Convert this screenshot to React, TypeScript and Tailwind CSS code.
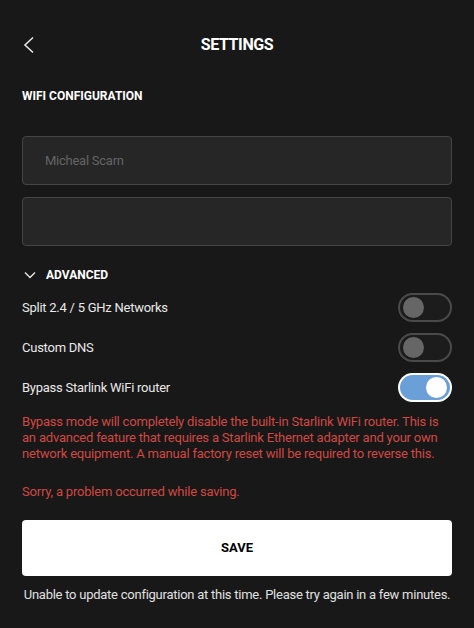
import { useState } from 'react';

function Toggle({ on, onChange }: { on: boolean; onChange: () => void }) {
  return (
    <button
      onClick={onChange}
      className={
        on
          ? 'flex h-[29px] w-[54px] items-center justify-end rounded-full border-2 border-white bg-[#6b9fd8] px-[3px]'
          : 'flex h-[29px] w-[54px] items-center justify-start rounded-full border-2 border-[#4a4a4a] bg-[#1c1c1c] px-[3px]'
      }
    >
      <span
        className={
          on
            ? 'h-[21px] w-[21px] rounded-full bg-white'
            : 'h-[21px] w-[21px] rounded-full bg-[#666666]'
        }
      />
    </button>
  );
}

function Row({ label, on, onChange }: { label: string; on: boolean; onChange: () => void }) {
  return (
    <div className="flex items-center justify-between">
      <span className="text-[13px] tracking-[-0.25px] text-[#e8e8e8]">{label}</span>
      <Toggle on={on} onChange={onChange} />
    </div>
  );
}

export default function App() {
  const [split, setSplit] = useState(false);
  const [dns, setDns] = useState(false);
  const [bypass, setBypass] = useState(true);

  return (
    <div className="min-h-[628px] w-full bg-[#181818] px-[22px] font-['Roboto','Liberation_Sans',sans-serif] text-white">
      {/* header */}
      <div className="relative flex h-[89px] items-center justify-center pt-[1px]">
        <button className="absolute left-[1px] top-[36px] text-[#e5e5e5]">
          <svg width="12" height="18" viewBox="0 0 12 18" fill="none">
            <path d="M10 1.5L2 9l8 7.5" stroke="currentColor" strokeWidth="1.6" />
          </svg>
        </button>
        <h1 className="text-[16px] font-bold tracking-[-0.4px]">SETTINGS</h1>
      </div>

      <div className="h-[14px] text-[12px] font-bold leading-[14px]">WIFI CONFIGURATION</div>

      <div className="mt-[33px] flex flex-col gap-[12px]">
        <input
          placeholder="Micheal Scarn"
          className="h-[49px] w-full rounded-[4px] border border-[#454545] bg-[#262626] px-[22px] text-[13px] tracking-[-0.25px] text-white outline-none placeholder:text-[#646464]"
        />
        <input className="h-[49px] w-full rounded-[4px] border border-[#454545] bg-[#262626] px-[22px] text-[13px] text-white outline-none" />
      </div>

      <div className="mt-[21px] flex h-[16px] items-center gap-[10px]">
        <svg width="12" height="8" viewBox="0 0 12 8" fill="none" className="ml-[2px]">
          <path d="M1 1.5l5 5 5-5" stroke="#e5e5e5" strokeWidth="1.4" />
        </svg>
        <span className="text-[12px] font-bold">ADVANCED</span>
      </div>

      <div className="mt-[10px] flex flex-col gap-[11px]">
        <Row label="Split 2.4 / 5 GHz Networks" on={split} onChange={() => setSplit(!split)} />
        <Row label="Custom DNS" on={dns} onChange={() => setDns(!dns)} />
        <Row label="Bypass Starlink WiFi router" on={bypass} onChange={() => setBypass(!bypass)} />
      </div>

      <p className="mt-[12px] text-[13px] leading-[16px] tracking-[-0.2px] text-[#d04843]">
        Bypass mode will completely disable the built-in Starlink WiFi router. This is an advanced feature
        that requires a Starlink Ethernet adapter and your own network equipment. A manual factory reset
        will be required to reverse this.
      </p>

      <p className="mt-[22px] text-[13px] leading-[16px] tracking-[-0.2px] text-[#d04843]">
        Sorry, a problem occurred while saving.
      </p>

      <button className="mt-[20px] h-[56px] w-full rounded-[4px] bg-white text-[13px] font-bold text-black">
        SAVE
      </button>

      <p className="mt-[11px] text-center text-[13px] leading-[16px] tracking-[-0.25px] text-[#e0e0e0]">
        Unable to update configuration at this time. Please try again in a few minutes.
      </p>
    </div>
  );
}
